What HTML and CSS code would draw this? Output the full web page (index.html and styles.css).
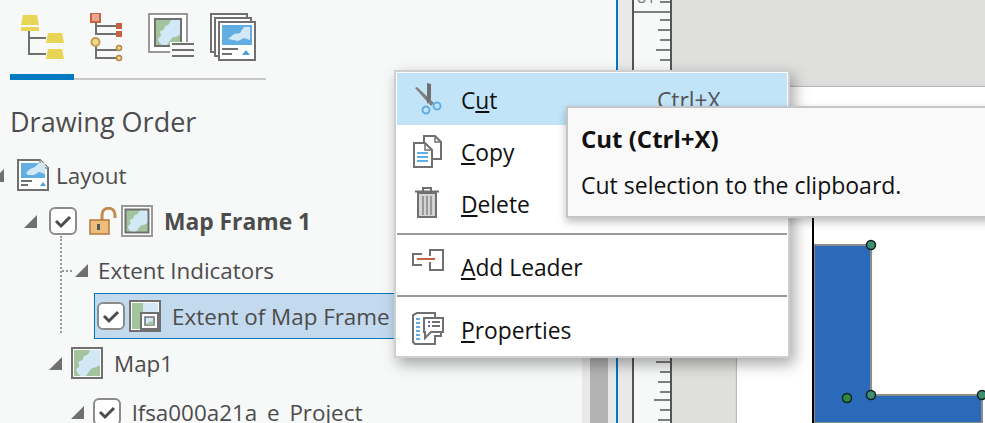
FILE: index.html
```html
<!DOCTYPE html>
<html>
<head>
    <title>Drawing Order</title>
    <link rel="stylesheet" href="styles.css">
</head>
<body>

<svg class="defs" width="0" height="0">
    <defs>
        <!-- the little map picture, used by all the map icons -->
        <symbol id="map" viewBox="0 0 24 24" preserveAspectRatio="none">
            <rect width="24" height="24" fill="#d3e8f6"/>
            <path d="M0 0H15L13 4 9 6 8 9 4 11 5 15 2 18 3 21 6 24H0Z" fill="#a3c59d"/>
            <path d="M24 14L20 16 16 17 13 21 11 24H24Z" fill="#a3c59d"/>
        </symbol>
        <symbol id="check" viewBox="0 0 28 28">
            <rect x="1" y="1" width="26" height="26" rx="5" fill="#fff" stroke="#8c8c8c" stroke-width="2"/>
            <path d="M7 14l5 5 9-9" fill="none" stroke="#4c4c4c" stroke-width="3"/>
        </symbol>
        <symbol id="layout" viewBox="0 0 32 32">
            <path d="M1 1H23L31 9V31H1Z" fill="#fff" stroke="#707070" stroke-width="2"/>
            <path d="M23 1V9H31" fill="#fff" stroke="#8c8c8c" stroke-width="1.5"/>
            <rect x="4" y="4" width="24" height="15" fill="#62ade2"/>
            <path d="M9 14L13 10 18 8 22 4H28V15L22 13 17 16 11 16Z" fill="#d3e8f6"/>
            <path d="M4 22H15M4 26H11" stroke="#707070" stroke-width="2"/>
            <path d="M23 27L26 23 29 27Z" fill="#4b9fdc"/>
        </symbol>
    </defs>
</svg>

<div class="app">
    <div class="pane">
        <div class="tabs">
            <svg class="tab-icon" width="48" height="50" viewBox="0 0 48 50">
                <path d="M9 16V40M9 23H26M9 39H26" fill="none" stroke="#707070" stroke-width="2"/>
                <path d="M3 0H17L19 10H1Z M1 12H19V16H1Z" fill="#e8d455"/>
                <path d="M28 18H42L44 28H26Z M28 34H42L44 44H26Z" fill="#e8d455"/>
            </svg>
            <svg class="tab-icon" width="34" height="50" viewBox="0 0 34 50">
                <path d="M6 10V21H27M6 13H27M6 32V45H27M6 37H27" fill="none" stroke="#707070" stroke-width="2"/>
                <rect x="1" y="0" width="9" height="9" fill="#e8a793" stroke="#c8613f" stroke-width="2"/>
                <rect x="26" y="10" width="6" height="6" fill="#c8613f"/>
                <rect x="26" y="18" width="6" height="6" fill="#c8613f"/>
                <circle cx="5.500" cy="29" r="4" fill="#eedc80" stroke="#c49a55" stroke-width="2"/>
                <circle cx="29" cy="35" r="2.500" fill="#eedc80" stroke="#b5874a" stroke-width="1.500"/>
                <circle cx="29" cy="45" r="2.500" fill="#eedc80" stroke="#b5874a" stroke-width="1.500"/>
            </svg>
            <svg class="tab-icon" width="47" height="50" viewBox="0 0 47 50">
                <rect x="1" y="1" width="38" height="38" fill="#fff" stroke="#999" stroke-width="2"/>
                <use href="#map" x="8" y="7" width="24" height="25"/>
                <rect x="7" y="6" width="26" height="27" fill="none" stroke="#707070" stroke-width="2"/>
                <rect x="22" y="29" width="25" height="21" fill="#f7f8f8"/>
                <path d="M24 31H46M24 37H46M24 43H46" stroke="#707070" stroke-width="2"/>
            </svg>
            <svg class="tab-icon" width="46" height="50" viewBox="0 0 46 50">
                <rect x="1" y="1" width="36" height="38" fill="#fff" stroke="#707070" stroke-width="2"/>
                <rect x="5" y="5" width="36" height="38" fill="#fff" stroke="#707070" stroke-width="2"/>
                <rect x="9" y="9" width="36" height="38" fill="#fff" stroke="#707070" stroke-width="2"/>
                <rect x="12" y="12" width="30" height="20" fill="#62ade2"/>
                <path d="M18 26L24 21 30 20 34 14 40 14V27L34 25 28 28Z" fill="#d3e8f6"/>
                <path d="M12 36H28M12 41H22" stroke="#707070" stroke-width="2"/>
                <path d="M32 42L36 37 40 42Z" fill="#4b9fdc"/>
            </svg>
        </div>
        <div class="tab-line"><div class="tab-active"></div></div>

        <h1 class="heading">Drawing Order</h1>

        <div class="tree">
            <div class="row row-layout">
                <span class="arrow"></span>
                <svg class="icon" width="32" height="32"><use href="#layout"/></svg>
                <span class="label">Layout</span>
            </div>
            <div class="row row-frame">
                <span class="arrow"></span>
                <svg class="check" width="28" height="28"><use href="#check"/></svg>
                <svg class="lock" width="28" height="28" viewBox="0 0 28 28">
                    <path d="M13 14V8C13 -1 26 -1 26 8V11" fill="none" stroke="#c28a4c" stroke-width="3"/>
                    <rect x="1" y="13" width="19" height="14" fill="#eebc7d" stroke="#b5793c" stroke-width="1.500"/>
                    <rect x="8" y="17" width="3" height="6" fill="#555"/>
                </svg>
                <svg class="icon" width="32" height="32" viewBox="0 0 32 32">
                    <rect x="1" y="1" width="30" height="30" fill="#fff" stroke="#999" stroke-width="2"/>
                    <use href="#map" x="5" y="5" width="22" height="22"/>
                    <rect x="4.500" y="4.500" width="23" height="23" fill="none" stroke="#707070" stroke-width="2"/>
                </svg>
                <span class="label label-bold">Map Frame 1</span>
            </div>
            <div class="row row-extent">
                <span class="dots-down"></span>
                <span class="dots-across"></span>
                <span class="arrow"></span>
                <span class="label">Extent Indicators</span>
            </div>
            <div class="row row-selected">
                <svg class="check" width="28" height="28"><use href="#check"/></svg>
                <svg class="icon" width="32" height="32" viewBox="0 0 32 32">
                    <rect x="1" y="1" width="30" height="30" fill="#fff" stroke="#707070" stroke-width="2"/>
                    <path d="M3 3H14V13H11V29H3Z" fill="#a3c59d"/>
                    <path d="M14 3H29V13H14Z" fill="#d3e8f6"/>
                    <rect x="12" y="13" width="17" height="16" fill="#fff" stroke="#707070" stroke-width="2"/>
                    <rect x="16" y="17" width="9" height="8" fill="#d3e8f6" stroke="#707070" stroke-width="1.500"/>
                    <path d="M17 25L20 22 24.500 21V25Z" fill="#a3c59d"/>
                </svg>
                <span class="label">Extent of Map Frame 1</span>
            </div>
            <div class="row row-map">
                <span class="arrow"></span>
                <svg class="icon" width="32" height="32" viewBox="0 0 32 32">
                    <rect x="1" y="1" width="30" height="30" fill="#fff" stroke="#707070" stroke-width="2"/>
                    <use href="#map" x="3" y="3" width="26" height="26"/>
                </svg>
                <span class="label">Map1</span>
            </div>
            <div class="row row-project">
                <span class="arrow"></span>
                <svg class="check" width="28" height="28"><use href="#check"/></svg>
                <span class="label">lfsa000a21a_e_Project</span>
            </div>
        </div>
    </div>

    <div class="scrollbar"><div class="thumb"></div></div>
    <div class="split"></div>
    <div class="gutter"></div>

    <div class="ruler">
        <svg width="36" height="423" viewBox="0 0 36 423">
            <text class="ruler-num" x="3" y="3">81</text>
            <path d="M0 12H36M26 2H36M26 20H36M24 30H36M26 40H36M22 50H36M26 60H36
                     M22 362H36M26 372H36M24 382H36M26 392H36M20 400H36M26 410H36M24 420H36" stroke="#555" stroke-width="1.500"/>
        </svg>
    </div>

    <div class="workspace">
        <div class="sheet">
            <svg width="248" height="336" viewBox="0 0 248 336">
                <path d="M77 158H134V308H245V336H77Z" fill="#2b6ab8" stroke="#8c8c8c" stroke-width="2"/>
                <rect x="75" y="20" width="2" height="316" fill="#000"/>
                <circle class="handle" cx="134" cy="158" r="4.500"/>
                <circle class="handle" cx="134" cy="308" r="4.500"/>
                <circle class="handle" cx="245" cy="308" r="4.500"/>
                <circle class="handle handle-pivot" cx="110" cy="311" r="4.500"/>
            </svg>
        </div>
    </div>
</div>

<div class="menu">
    <div class="item item-hot">
        <svg class="item-icon" width="32" height="34" viewBox="0 0 32 34">
            <path d="M4 6L6 5 23 21 20 24Z" fill="#808080"/>
            <path d="M16 1L20 2V17L16 22Z" fill="#707070"/>
            <circle cx="15" cy="28" r="3.500" fill="none" stroke="#62ade2" stroke-width="2"/>
            <circle cx="26" cy="24" r="3.500" fill="none" stroke="#62ade2" stroke-width="2"/>
        </svg>
        <span class="item-text">C<u>u</u>t</span>
        <span class="item-key">Ctrl+X</span>
    </div>
    <div class="item">
        <svg class="item-icon" width="32" height="34" viewBox="0 0 32 34">
            <path d="M13 2H24L30 8V25H13Z" fill="#fff" stroke="#707070" stroke-width="2"/>
            <path d="M3 9H14L21 16V33H3Z" fill="#fff" stroke="#707070" stroke-width="2"/>
            <path d="M14 9V16H21M24 2V8H30" fill="none" stroke="#707070" stroke-width="1.500"/>
            <path d="M6 19H17M6 23H17M6 27H17" stroke="#62ade2" stroke-width="2"/>
        </svg>
        <span class="item-text"><u>C</u>opy</span>
    </div>
    <div class="item">
        <svg class="item-icon" width="32" height="34" viewBox="0 0 32 34">
            <path d="M4 5.500H28M12 5V2H20V5" fill="none" stroke="#707070" stroke-width="2"/>
            <path d="M7 7H25V31H7Z" fill="#d4d4d4" stroke="#707070" stroke-width="2"/>
            <path d="M12 10V29M16 10V29M20 10V29" stroke="#999" stroke-width="2"/>
        </svg>
        <span class="item-text"><u>D</u>elete</span>
    </div>
    <div class="sep"></div>
    <div class="item">
        <svg class="item-icon" width="34" height="34" viewBox="0 0 34 34">
            <path d="M11 5H2V16H11M19 7V1H32V21H19V13" fill="none" stroke="#707070" stroke-width="2"/>
            <path d="M6 10H24" stroke="#c8613f" stroke-width="2"/>
        </svg>
        <span class="item-text"><u>A</u>dd Leader</span>
    </div>
    <div class="sep sep-last"></div>
    <div class="item">
        <svg class="item-icon" width="34" height="34" viewBox="0 0 34 34">
            <path d="M6 1H24V10H30V24H24V32H4L2 30V3Z" fill="#fff" stroke="#707070" stroke-width="2"/>
            <path d="M5 7H9M5 11H9M5 15H9M5 19H9M5 23H9M5 27H9" stroke="#62ade2" stroke-width="2"/>
            <path d="M13 6H32V20H20L14 26V20H13Z" fill="#fff" stroke="#707070" stroke-width="2"/>
            <path d="M17 10H19M17 14H19" stroke="#6a5fb0" stroke-width="2"/>
            <path d="M21 10H29M21 14H29" stroke="#707070" stroke-width="2"/>
        </svg>
        <span class="item-text"><u>P</u>roperties</span>
    </div>
</div>

<div class="tip">
    <div class="tip-title">Cut (Ctrl+X)</div>
    <div class="tip-text">Cut selection to the clipboard.</div>
</div>

</body>
</html>
```

FILE: styles.css
```css
html, body {
    margin: 0;
    height: 100%;
    overflow: hidden;
    background: #f7f8f8;
    font-family: "Open Sans", "Noto Sans", sans-serif;
}
.defs {
    display: block;
    height: 0;
}
.app {
    display: flex;
    height: 423px;
    overflow: hidden;
}

/* left pane */
.pane {
    width: 582px;
    flex: none;
    overflow: hidden;
    background: #f7f8f8;
}
.tabs {
    display: flex;
    height: 50px;
    padding: 13px 0 0 20px;
    align-items: flex-start;
}
.tabs .tab-icon {
    flex: none;
}
.tabs .tab-icon:nth-child(1) { margin-top: 2px; margin-right: 22px; }
.tabs .tab-icon:nth-child(2) { margin-right: 24px; }
.tabs .tab-icon:nth-child(3) { margin-right: 15px; }
.tab-line {
    width: 256px;
    height: 2px;
    margin: 15px 0 0 10px;
    background: #c8c8c8;
    position: relative;
}
.tab-active {
    position: absolute;
    left: 0;
    bottom: 0;
    width: 64px;
    height: 6px;
    background: #0079c1;
}
.heading {
    margin: 25px 0 0 10px;
    font-size: 27px;
    line-height: 34px;
    font-weight: 400;
    color: #4c4c4c;
}

/* tree */
.tree {
    margin-top: 14px;
    font-size: 22.4px;
    color: #4c4c4c;
}
.row {
    display: flex;
    align-items: center;
    position: relative;
    white-space: nowrap;
}
.row-layout   { height: 44px; margin-left: -9px; }
.row-frame    { height: 48px; padding-left: 24px; }
.row-extent   { height: 46px; padding: 2px 0 0 75px; }
.row-selected {
    height: 44px;
    margin-left: 94px;
    padding-left: 2px;
    border: 1px solid #0079c1;
    border-right: 0;
    background: #c2d9ee;
}
.row-map      { height: 48px; padding-left: 49px; }
.row-project  { height: 50px; padding-left: 71px; }

.arrow {
    width: 0;
    height: 0;
    flex: none;
    border-style: solid;
    border-width: 0 0 13px 13px;
    border-color: transparent transparent #707070 transparent;
}
.row-layout .arrow   { margin-right: 13px; }
.row-frame .arrow    { margin-right: 12px; }
.row-extent .arrow   { margin-right: 10px; }
.row-map .arrow      { margin-right: 9px; }
.row-project .arrow  { margin-right: 9px; }
.check, .icon, .lock { flex: none; }
.row-frame .lock     { margin-left: 12px; }
.row-frame .icon     { margin-left: 4px; }
.row-selected .icon  { margin-left: 4px; }
.label { margin-left: 7px; }
.row-frame .label    { margin-left: 11px; font-size: 22.8px; }
.row-selected .label { margin-left: 11px; }
.row-map .label      { margin-left: 11px; }
.row-project .label  { margin-left: 11px; }
.row-extent .label   { margin-left: 0; }
.label-bold { font-weight: 700; }
.dots-down {
    position: absolute;
    left: 60px;
    top: -9px;
    height: 97px;
    border-left: 2px dotted #999;
}
.dots-across {
    position: absolute;
    left: 62px;
    top: 25px;
    width: 10px;
    border-top: 2px dotted #999;
}

/* strip between the pane and the layout view */
.scrollbar {
    width: 26px;
    flex: none;
    margin-top: 72px;
    padding-left: 8px;
    background: #e9e9e9;
}
.thumb {
    width: 18px;
    height: 100%;
    background: #b3b3b3;
}
.split {
    width: 2px;
    flex: none;
    background: #0079c1;
}
.gutter {
    width: 14px;
    flex: none;
    background: #e9e9e9;
}
.ruler {
    width: 36px;
    flex: none;
    border-left: 2px solid #555;
    border-right: 2px solid #555;
    background: #f7f8f8;
}
.ruler svg {
    display: block;
}
.ruler-num {
    font-size: 16px;
    fill: #777;
}
.workspace {
    flex: 1;
    padding: 87px 0 0 65px;
    background: #dfdfdd;
}
.sheet {
    height: 336px;
    background: #fff;
    box-shadow: 0 -1px 1px #bbb, -1px 0 1px #bbb;
}
.sheet svg {
    display: block;
}
.handle {
    fill: #3f8f77;
    stroke: #10201a;
    stroke-width: 1.500;
}
.handle-pivot {
    fill: #2e8b3e;
}

/* context menu */
.menu {
    position: absolute;
    left: 394px;
    top: 70px;
    width: 390px;
    padding: 1px;
    background: #fff;
    border: 2px solid #cfcfd1;
    box-shadow: 4px 6px 14px rgba(0, 0, 0, 0.35);
    color: #111;
    font-size: 22.8px;
}
.item {
    display: flex;
    align-items: center;
    height: 52px;
    position: relative;
}
.item-hot {
    background: #c1e4f9;
}
.item-icon {
    flex: none;
    margin-left: 14px;
}
.item-text {
    position: absolute;
    left: 64px;
    padding-top: 2px;
}
.item-key {
    position: absolute;
    left: 260px;
    padding-top: 2px;
    color: #555;
}
.sep {
    height: 2px;
    margin: 4px 0 5px;
    background: #999;
}
.sep-last {
    margin: 3px 0 6px;
}

/* tooltip over the menu */
.tip {
    position: absolute;
    left: 566px;
    top: 106px;
    width: 440px;
    height: 108px;
    padding-left: 13px;
    background: #f9f9f9;
    border: 2px solid #c5c5c9;
    box-shadow: 0 4px 8px rgba(0, 0, 0, 0.25);
    color: #111;
    font-size: 23px;
}
.tip-title {
    margin-top: 14px;
    font-size: 24px;
    font-weight: 700;
}
.tip-text {
    margin-top: 14px;
}
```
